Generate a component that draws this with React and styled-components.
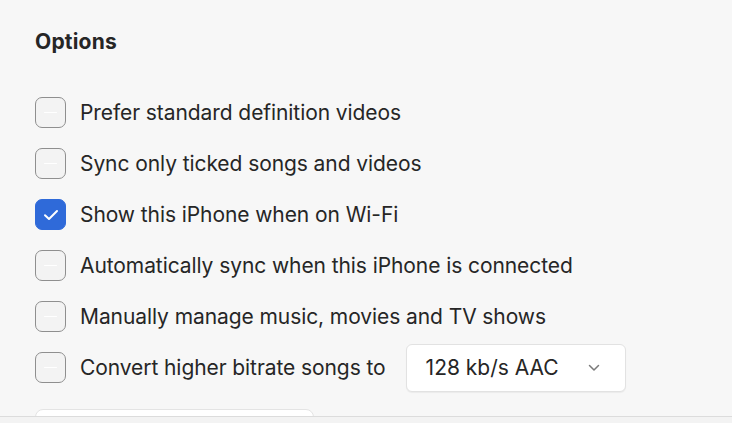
import React, { useState } from "react";
import styled, { createGlobalStyle } from "styled-components";

const GlobalStyle = createGlobalStyle`
  html, body {
    margin: 0;
    padding: 0;
    background: #f7f7f7;
  }
  body {
    font-family: Inter, "Noto Sans", "Liberation Sans", sans-serif;
    color: #262626;
    -webkit-font-smoothing: antialiased;
  }
`;

const options = [
  { key: "sd", label: "Prefer standard definition videos" },
  { key: "ticked", label: "Sync only ticked songs and videos" },
  { key: "wifi", label: "Show this iPhone when on Wi-Fi" },
  { key: "auto", label: "Automatically sync when this iPhone is connected" },
  { key: "manual", label: "Manually manage music, movies and TV shows" },
];

const App = () => {
  const [checked, setChecked] = useState({ wifi: true });
  const [bitrate, setBitrate] = useState("128 kb/s AAC");

  const toggle = (key) => setChecked({ ...checked, [key]: !checked[key] });

  return (
    <Page>
      <GlobalStyle />
      <Pane>
        <Heading>Options</Heading>
        <List>
          {options.map((o) => (
            <Row key={o.key} onClick={() => toggle(o.key)}>
              <Box $on={!!checked[o.key]}>
                {checked[o.key] ? <Tick /> : <Dash />}
              </Box>
              <Label>{o.label}</Label>
            </Row>
          ))}
          <Row>
            <Box $on={!!checked.convert} onClick={() => toggle("convert")}>
              {checked.convert ? <Tick /> : <Dash />}
            </Box>
            <Label onClick={() => toggle("convert")}>
              Convert higher bitrate songs to
            </Label>
            <Select onClick={() => setBitrate(bitrate)}>
              <span>{bitrate}</span>
              <Chevron />
            </Select>
          </Row>
        </List>
        <NextButton />
      </Pane>
      <Footer />
    </Page>
  );
};

const Tick = () => (
  <svg width="16" height="12" viewBox="0 0 16 12" fill="none">
    <path
      d="M2 6.2 L6 10 L14 2"
      stroke="#fff"
      strokeWidth="2"
      strokeLinecap="round"
      strokeLinejoin="round"
    />
  </svg>
);

const Chevron = () => (
  <svg width="12" height="8" viewBox="0 0 12 8" fill="none">
    <path
      d="M1.5 1.5 L6 6 L10.5 1.5"
      stroke="#7a7a7a"
      strokeWidth="1.5"
      strokeLinecap="round"
      strokeLinejoin="round"
    />
  </svg>
);

const Page = styled.div`
  height: 100vh;
  display: flex;
  flex-direction: column;
`;

const Pane = styled.div`
  height: 417px;
  flex: none;
  box-sizing: border-box;
  padding: 30px 0 0 35px;
  overflow: hidden;
  border-bottom: 1px solid #dcdcdc;
`;

const Footer = styled.div`
  flex: 1;
  background: #f3f3f3;
`;

const Heading = styled.h2`
  margin: 0;
  font-size: 21px;
  font-weight: 650;
  line-height: 24px;
  letter-spacing: 0.2px;
  color: #262626;
  height: 57px;
`;

const List = styled.div`
  display: flex;
  flex-direction: column;
`;

const Row = styled.div`
  height: 51px;
  display: flex;
  align-items: center;
  cursor: default;
`;

const Box = styled.div`
  width: 31px;
  height: 31px;
  box-sizing: border-box;
  flex: none;
  border-radius: 7px;
  display: flex;
  align-items: center;
  justify-content: center;
  background: ${(p) => (p.$on ? "#2f6ad9" : "#f3f3f3")};
  border: 1.5px solid ${(p) => (p.$on ? "#2f6ad9" : "#8f8f8f")};
`;

const Dash = styled.span`
  width: 13px;
  height: 1.5px;
  border-radius: 1px;
  background: #ffffff;
`;

const Label = styled.span`
  margin-left: 14px;
  font-size: 21px;
  color: #262626;
  letter-spacing: -0.08px;
`;

const Select = styled.div`
  margin-left: 20px;
  width: 220px;
  height: 48px;
  box-sizing: border-box;
  display: flex;
  align-items: center;
  justify-content: space-between;
  padding: 0 25px 0 19px;
  background: #ffffff;
  border: 1px solid #e2e2e2;
  border-radius: 6px;
  box-shadow: 0 1px 1px rgba(0, 0, 0, 0.05);
  font-size: 21px;
  color: #262626;
`;

const NextButton = styled.div`
  margin-top: 16px;
  width: 279px;
  height: 40px;
  box-sizing: border-box;
  background: #ffffff;
  border: 1px solid #e4e4e4;
  border-radius: 8px;
`;

export default App;
